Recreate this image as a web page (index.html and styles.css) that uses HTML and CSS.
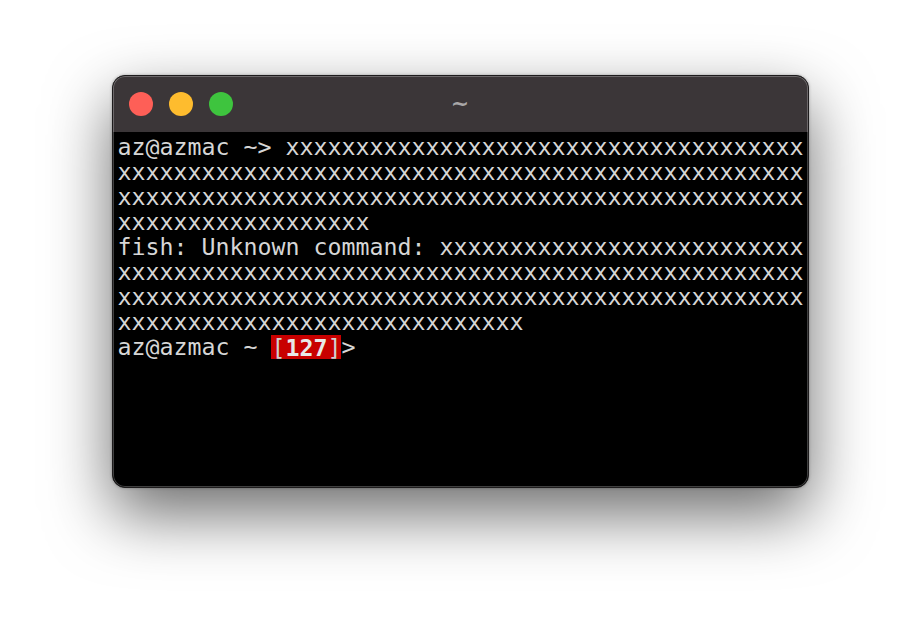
FILE: index.html
```html
<!DOCTYPE html>
<html lang="en">
<head>
    <meta charset="utf-8">
    <title>~</title>
    <link rel="stylesheet" href="styles.css">
</head>
<body>
<div class="window">
    <div class="titlebar">
        <div class="lights">
            <span class="light close"></span>
            <span class="light minimize"></span>
            <span class="light zoom"></span>
        </div>
        <div class="title">~</div>
    </div>
    <div class="terminal">
        <div class="line">az@azmac ~&gt; xxxxxxxxxxxxxxxxxxxxxxxxxxxxxxxxxxxxx</div>
        <div class="line">xxxxxxxxxxxxxxxxxxxxxxxxxxxxxxxxxxxxxxxxxxxxxxxxx</div>
        <div class="line">xxxxxxxxxxxxxxxxxxxxxxxxxxxxxxxxxxxxxxxxxxxxxxxxx</div>
        <div class="line">xxxxxxxxxxxxxxxxxx</div>
        <div class="line">fish: Unknown command: xxxxxxxxxxxxxxxxxxxxxxxxxx</div>
        <div class="line">xxxxxxxxxxxxxxxxxxxxxxxxxxxxxxxxxxxxxxxxxxxxxxxxx</div>
        <div class="line">xxxxxxxxxxxxxxxxxxxxxxxxxxxxxxxxxxxxxxxxxxxxxxxxx</div>
        <div class="line">xxxxxxxxxxxxxxxxxxxxxxxxxxxxx</div>
        <div class="line">az@azmac ~ <span class="status">[<b>127</b>]</span>&gt;</div>
    </div>
</div>
</body>
</html>
```

FILE: styles.css
```css
/* Page */
html, body {
    margin: 0;
    background: #ffffff;
}
body {
    box-sizing: border-box;
    min-height: 636px;
    display: flex;
    justify-content: center;
    align-items: flex-start;
    padding-top: 75px;
}

/* Window frame */
.window {
    width: 695px;
    height: 411px;
    border: 1px solid #1e1c1d;
    border-radius: 13px;
    overflow: hidden;
    background: #000;
    box-shadow: 0 26px 64px rgba(0, 0, 0, 0.58),
                0 0 3px rgba(0, 0, 0, 0.3);
    display: flex;
    flex-direction: column;
    position: relative;
}
.window::after {
    /* inner light rim drawn over the content */
    content: "";
    position: absolute;
    inset: 0;
    border-radius: 12px;
    box-shadow: inset 0 0 0 1px rgba(255, 255, 255, 0.25);
    pointer-events: none;
}

.titlebar {
    height: 56px;
    flex: none;
    background: #3b3638;
    display: flex;
    align-items: center;
    position: relative;
}
.lights {
    display: flex;
    gap: 16px;
    padding-left: 16px;
}
.light {
    width: 24px;
    height: 24px;
    border-radius: 50%;
}
.close { background: #fe5f57; }
.minimize { background: #febc2e; }
.zoom { background: #3ec43e; }
.title {
    position: absolute;
    left: 0;
    right: 0;
    text-align: center;
    top: 15px;
    color: #a9a7a8;
    font: bold 22px "DejaVu Sans", sans-serif;
}

/* Terminal text */
.terminal {
    flex: 1;
    background: #000;
    padding: 2px 0 0 5px;
    color: #d6d6d6;
    font-family: "DejaVu Sans Mono", monospace;
    font-size: 23.25px;
    line-height: 25px;
}
.line {
    white-space: pre;
    height: 25px;
}
.status {
    background: #c80000;
    color: #d0d0d0;
    display: inline-block;
    height: 24px;
    line-height: 25px;
    vertical-align: top;
    margin-top: 1px;
}
.status b {
    color: #e8e8e8;
}
```
